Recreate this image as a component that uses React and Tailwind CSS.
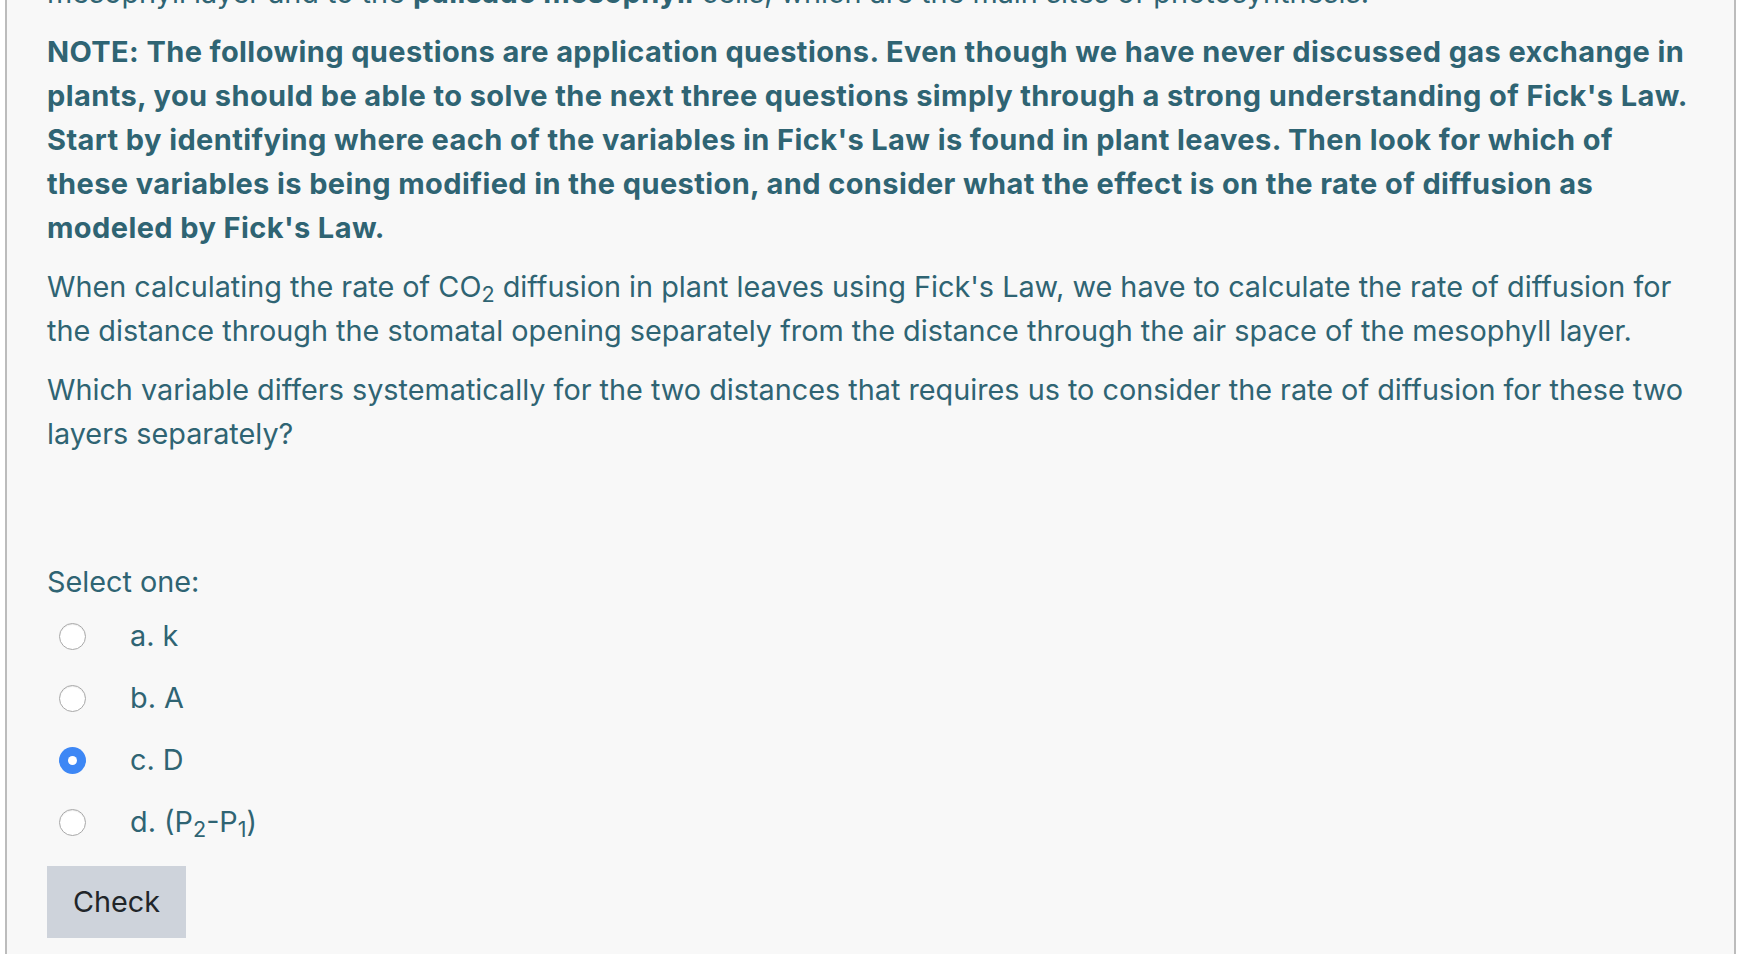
import React from "react";

function Radio({ checked }) {
  if (checked) {
    return (
      <span className="flex h-[27px] w-[27px] items-center justify-center rounded-full bg-[#3d87f5]">
        <span className="h-[9px] w-[9px] rounded-full bg-white" />
      </span>
    );
  }
  return (
    <span className="block h-[27px] w-[27px] rounded-full border border-[#a8a8a8] bg-white shadow-[inset_0_1px_1px_rgba(0,0,0,0.08)]" />
  );
}

export default function App() {
  const options = [
    { label: "a.", text: <>k</> },
    { label: "b.", text: <>A</> },
    { label: "c.", text: <>D</>, checked: true },
    {
      label: "d.",
      text: (
        <>
          (P<sub>2</sub>-P<sub>1</sub>)
        </>
      ),
    },
  ];
  return (
    <div
      className="h-[954px] w-[1738px] overflow-hidden bg-white"
      style={{ fontFamily: "Inter, 'Noto Sans', sans-serif" }}
    >
      <div className="ml-[5px] flow-root h-full w-[1731px] border-x-2 border-[#bcbcbc] bg-[#f8f8f8] pl-[40px] text-[28.8px] leading-[44px] text-[#2f6473]">
        <p className="-mt-[29px] mb-[15px] whitespace-nowrap">
          mesophyll layer and to the <b className="text-[29px] font-bold tracking-[0.4px]">palisade mesophyll</b> cells, which are the main sites of photosynthesis.
        </p>
        <p className="mb-[15px] whitespace-nowrap text-[29px] font-bold tracking-[0.4px]">
          NOTE: The following questions are application questions. Even though we have never discussed gas exchange in
          <br />
          plants, you should be able to solve the next three questions simply through a strong understanding of Fick's Law.
          <br />
          Start by identifying where each of the variables in Fick's Law is found in plant leaves. Then look for which of
          <br />
          these variables is being modified in the question, and consider what the effect is on the rate of diffusion as
          <br />
          modeled by Fick's Law.
        </p>
        <p className="mb-[15px] whitespace-nowrap">
          When calculating the rate of CO<sub>2</sub> diffusion in plant leaves using Fick's Law, we have to calculate the rate of diffusion for
          <br />
          the distance through the stomatal opening separately from the distance through the air space of the mesophyll layer.
        </p>
        <p className="whitespace-nowrap">
          Which variable differs systematically for the two distances that requires us to consider the rate of diffusion for these two
          <br />
          layers separately?
        </p>
        <p className="mt-[104px]">Select one:</p>
        <div className="mt-[1px] flex flex-col">
          {options.map((o, i) => (
            <div key={i} className="flex h-[62px] items-center">
              <span className="ml-[12px] flex w-[71px] items-center">
                <Radio checked={o.checked} />
              </span>
              <span>
                {o.label} {o.text}
              </span>
            </div>
          ))}
        </div>
        <button className="mt-[13px] h-[72px] w-[139px] bg-[#ced3db] text-[28.8px] text-[#212529]">
          Check
        </button>
      </div>
    </div>
  );
}
